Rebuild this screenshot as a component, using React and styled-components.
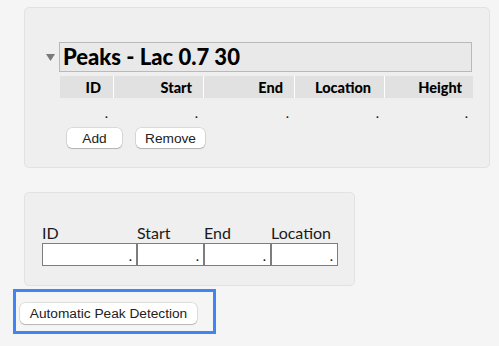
import React from "react";
import styled, { createGlobalStyle } from "styled-components";

const GlobalStyle = createGlobalStyle`
  body {
    margin: 0;
    background: #f5f5f5;
    font-family: Lato, "Open Sans", sans-serif;
    color: #111;
  }
`;

const Page = styled.div`
  display: flex;
  flex-direction: column;
  align-items: flex-start;
  padding-top: 7px;
`;

const Panel = styled.div`
  box-sizing: border-box;
  margin-left: 24px;
  background: #efefef;
  border: 1px solid #e2e2e2;
  border-radius: 5px;
`;

const PeaksPanel = styled(Panel)`
  width: 466px;
  height: 161px;
  padding: 34px 17px 0 21px;
`;

const TitleRow = styled.div`
  display: flex;
  align-items: center;
`;

const Disclosure = styled.span`
  width: 13px;
  display: flex;
  justify-content: flex-start;
  svg {
    display: block;
  }
`;

const TitleBox = styled.div`
  flex: 1;
  height: 30px;
  box-sizing: border-box;
  border: 1px solid #b9b9b9;
  background: #e9e9e9;
  font-weight: 900;
  font-size: 22px;
  line-height: 28px;
  padding-left: 3px;
  color: #000;
`;

const Body = styled.div`
  margin-left: 14px;
`;

const Table = styled.div`
  display: grid;
  grid-template-columns: 53px 90px 91px 90px 89px;
  margin-top: 4px;
`;

const HeadCell = styled.div`
  background: #e1e1e1;
  height: 22px;
  line-height: 23px;
  font-weight: 900;
  font-size: 14.5px;
  text-align: right;
  padding-right: ${p => p.$pad || 11}px;
  border-left: ${p => (p.$first ? "none" : "1px solid #fff")};
  color: #000;
`;

const DataCell = styled.div`
  height: 26px;
  line-height: 30px;
  font-size: 14px;
  text-align: right;
  padding-right: 5px;
`;

const Buttons = styled.div`
  display: flex;
  gap: 14px;
  margin: 4px 0 0 7px;
`;

const Button = styled.button`
  box-sizing: border-box;
  height: ${p => p.$h || 20}px;
  width: ${p => p.$w}px;
  padding: 0;
  background: #fff;
  border: none;
  border-radius: 5px;
  box-shadow: 0 0 0 0.5px rgba(0, 0, 0, 0.18), 0 1px 1px rgba(0, 0, 0, 0.18);
  font-family: "Liberation Sans", Arial, sans-serif;
  font-size: 13.7px;
  color: #222;
`;

const RangePanel = styled(Panel)`
  margin-top: 24px;
  width: 331px;
  height: 94px;
  padding: 29px 0 0 17px;
`;

const Fields = styled.div`
  display: grid;
  grid-template-columns: 95px 67px 67px 67px;
`;

const Label = styled.div`
  font-size: 16px;
  line-height: 21px;
  color: #1a1a1a;
`;

const Field = styled.div`
  box-sizing: border-box;
  height: 23px;
  border: 1px solid #7d7d7d;
  background: #fff;
  text-align: right;
  padding-right: 4px;
  font-size: 14px;
  line-height: 24px;
`;

const FocusRing = styled.div`
  margin: 3px 0 0 13px;
  border: 3px solid #3f86f4;
  padding: 10px 16px 7px 4px;
`;

const columns = [
  { name: "ID", pad: 12 },
  { name: "Start" },
  { name: "End" },
  { name: "Location", pad: 13 },
  { name: "Height" },
];

const fields = ["ID", "Start", "End", "Location"];

const Triangle = () => (
  <svg width="9" height="7" viewBox="0 0 9 7">
    <path d="M0 0 H9 L4.5 7 Z" fill="#7a7a7a" />
  </svg>
);

export default function App() {
  return (
    <>
      <GlobalStyle />
      <Page>
        <PeaksPanel>
          <TitleRow>
            <Disclosure>
              <Triangle />
            </Disclosure>
            <TitleBox>Peaks - Lac 0.7 30</TitleBox>
          </TitleRow>
          <Body>
            <Table>
              {columns.map((c, i) => (
                <HeadCell key={c.name} $first={i === 0} $pad={c.pad}>
                  {c.name}
                </HeadCell>
              ))}
              {columns.map(c => (
                <DataCell key={c.name}>.</DataCell>
              ))}
            </Table>
            <Buttons>
              <Button $w={55}>Add</Button>
              <Button $w={69}>Remove</Button>
            </Buttons>
          </Body>
        </PeaksPanel>

        <RangePanel>
          <Fields>
            {fields.map(f => (
              <Label key={f}>{f}</Label>
            ))}
            {fields.map(f => (
              <Field key={f}>.</Field>
            ))}
          </Fields>
        </RangePanel>

        <FocusRing>
          <Button $w={177} $h={21}>Automatic Peak Detection</Button>
        </FocusRing>
      </Page>
    </>
  );
}
